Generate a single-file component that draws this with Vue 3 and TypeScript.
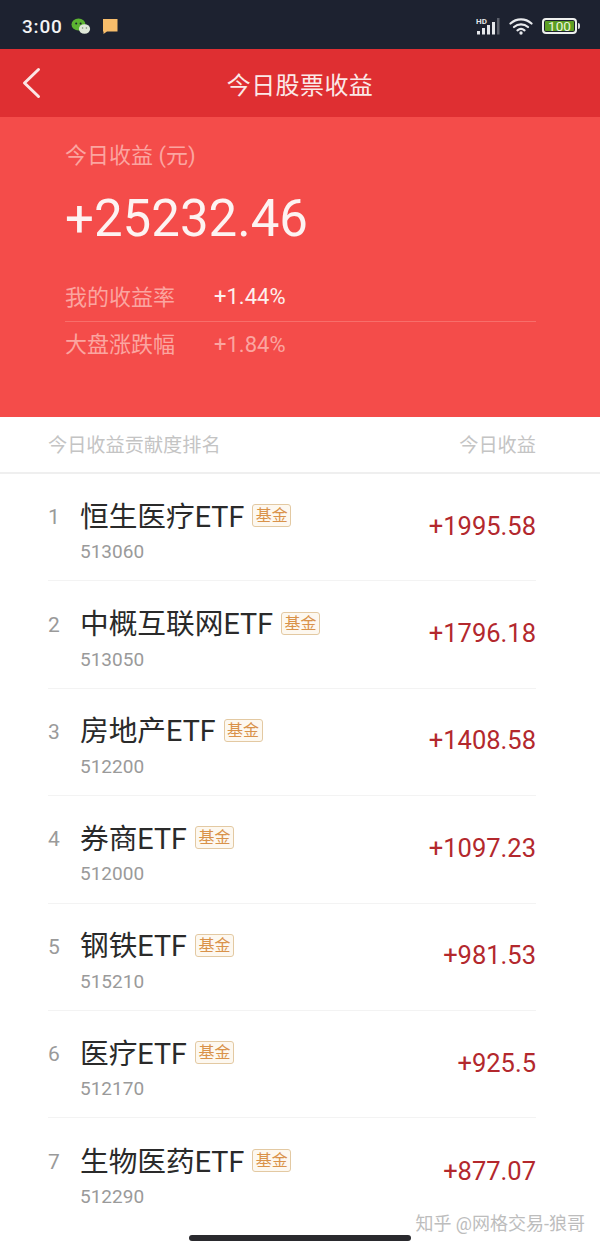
<script setup lang="ts">
interface Holding {
  name: string
  code: string
  gain: string
}

const holdings: Holding[] = [
  { name: '恒生医疗ETF', code: '513060', gain: '+1995.58' },
  { name: '中概互联网ETF', code: '513050', gain: '+1796.18' },
  { name: '房地产ETF', code: '512200', gain: '+1408.58' },
  { name: '券商ETF', code: '512000', gain: '+1097.23' },
  { name: '钢铁ETF', code: '515210', gain: '+981.53' },
  { name: '医疗ETF', code: '512170', gain: '+925.5' },
  { name: '生物医药ETF', code: '512290', gain: '+877.07' }
]
</script>

<template>
  <div class="page">
    <div class="status">
      <span class="time">3:00</span>
      <svg class="wechat" width="20" height="17" viewBox="0 0 20 17">
        <ellipse cx="7.5" cy="6.5" rx="7" ry="6" fill="#5cb531" />
        <ellipse cx="13.5" cy="11" rx="5.6" ry="4.8" fill="#dfe8d8" />
        <circle cx="5.2" cy="5.5" r="1" fill="#1d2230" />
        <circle cx="9.6" cy="5.5" r="1" fill="#1d2230" />
        <circle cx="11.6" cy="10" r=".8" fill="#7a8a70" />
        <circle cx="15.4" cy="10" r=".8" fill="#7a8a70" />
      </svg>
      <svg class="msg" width="16" height="16" viewBox="0 0 16 16">
        <path d="M1 1h14.500v12.500H5L1.500 16V13.500H1z" fill="#f7bd6b" />
      </svg>
      <span class="spacer"></span>
      <svg class="signal" width="24" height="18" viewBox="0 0 24 18">
        <text x="0" y="7" class="hd">HD</text>
        <rect x="1" y="14" width="3" height="3.500" fill="#e4e6ea" />
        <rect x="6" y="11" width="3" height="6.500" fill="#e4e6ea" />
        <rect x="11" y="8" width="3" height="9.500" fill="#e4e6ea" />
        <rect x="16" y="5" width="3" height="12.500" fill="#e4e6ea" />
        <rect x="21" y="1" width="2.500" height="16.500" fill="#5c606b" />
      </svg>
      <svg class="wifi" width="24" height="18" viewBox="0 0 24 18">
        <path d="M1.500 6.500C7.500 1 16.500 1 22.500 6.500M5 10c4-3.500 10-3.500 14 0M8.500 13.300c2-1.600 5-1.600 7 0" fill="none" stroke="#e9ebee" stroke-width="2.200" stroke-linecap="round" />
        <circle cx="12" cy="16" r="1.700" fill="#e9ebee" />
      </svg>
      <div class="battery">
        <div class="cell">100</div>
        <span class="nub"></span>
      </div>
    </div>

    <div class="nav">
      <svg class="back" width="20" height="32" viewBox="0 0 20 32">
        <path d="M17.500 2.500 3.500 16l14 13.500" fill="none" stroke="#fbe6e5" stroke-width="3" stroke-linecap="round" stroke-linejoin="round" />
      </svg>
      <span class="title">今日股票收益</span>
    </div>

    <div class="hero">
      <div class="hero-label">今日收益 (元)</div>
      <div class="hero-value">+25232.46</div>
      <div class="rate rate-mine">
        <span class="rate-name">我的收益率</span>
        <span class="rate-value">+1.44%</span>
      </div>
      <div class="rate rate-market">
        <span class="rate-name">大盘涨跌幅</span>
        <span class="rate-value dim">+1.84%</span>
      </div>
    </div>

    <div class="list-head">
      <span>今日收益贡献度排名</span>
      <span>今日收益</span>
    </div>

    <div class="list">
      <div v-for="(item, i) in holdings" :key="item.code" class="row">
        <span class="rank">{{ i + 1 }}</span>
        <div class="info">
          <div class="name-line">
            <span class="name">{{ item.name }}</span>
            <span class="tag">基金</span>
          </div>
          <div class="code">{{ item.code }}</div>
        </div>
        <span class="gain">{{ item.gain }}</span>
      </div>
    </div>

    <div class="watermark">知乎 @网格交易-狼哥</div>
    <div class="home-bar"></div>
  </div>
</template>

<style>
html,
body {
  margin: 0;
  background: #fff;
}
</style>

<style scoped>
.page {
  position: relative;
  width: 600px;
  height: 1249px;
  overflow: hidden;
  background: #fff;
  font-family: Roboto, "Noto Sans CJK SC", sans-serif;
}

.status {
  height: 49px;
  box-sizing: border-box;
  padding: 3px 20px 0 22px;
  display: flex;
  align-items: center;
  background: #1d2230;
}

.time {
  font-size: 19px;
  font-weight: 500;
  color: #f2f3f5;
  letter-spacing: 0.8px;
}

.wechat {
  margin-left: 8px;
}

.msg {
  margin-left: 11px;
}

.spacer {
  flex: 1;
}

.hd {
  font-size: 8px;
  font-weight: 700;
  fill: #e4e6ea;
}

.signal {
  margin-right: 1px;
}

.wifi {
  margin-left: 8px;
}

.battery {
  margin-left: 9px;
  display: flex;
  align-items: center;
}

.cell {
  width: 31px;
  height: 12px;
  border: 2px solid #eef0ee;
  border-radius: 4px;
  background: #5c9e23;
  box-shadow: inset 0 0 0 1px #1d2230;
  color: #eaf6dc;
  font-size: 13.5px;
  line-height: 12px;
  text-align: center;
}

.nub {
  width: 2px;
  height: 6px;
  margin-left: 1px;
  border-radius: 0 2px 2px 0;
  background: #d8dade;
}

.nav {
  position: relative;
  height: 68px;
  display: flex;
  align-items: center;
  justify-content: center;
  background: #df2f32;
}

.back {
  position: absolute;
  left: 21px;
  top: 18px;
}

.title {
  font-size: 24px;
  color: #fbe9e8;
  letter-spacing: 0.4px;
}

.hero {
  height: 300px;
  box-sizing: border-box;
  padding: 23px 64px 0 65px;
  background: #f44c4a;
}

.hero-label {
  font-size: 22px;
  line-height: 32px;
  color: #fba5a0;
}

.hero-value {
  margin-top: 18px;
  font-size: 51px;
  line-height: 58px;
  color: #fdf3f2;
}

.rate {
  display: flex;
  align-items: center;
  color: #fba5a0;
  font-size: 22px;
}

.rate-mine {
  box-sizing: border-box;
  height: 51px;
  margin-top: 23px;
  padding-bottom: 3px;
  border-bottom: 1px solid #f86e6a;
}

.rate-market {
  height: 40px;
}

.rate-name {
  width: 149px;
}

.rate-value {
  margin-top: 4px;
  font-size: 22px;
  color: #fdf0ee;
}

.rate-value.dim {
  color: #fba5a0;
}

.list-head {
  height: 57px;
  box-sizing: border-box;
  padding: 0 64px 2px 48px;
  display: flex;
  align-items: center;
  justify-content: space-between;
  border-bottom: 2px solid #efefef;
  color: #c4c4c4;
  font-size: 19.2px;
}

.list {
  padding: 0 64px 0 48px;
}

.row {
  height: 107.4px;
  box-sizing: border-box;
  display: flex;
  align-items: center;
  border-bottom: 1px solid #f3f3f3;
}

.row:last-child {
  border-bottom: 0;
}

.rank {
  width: 32px;
  margin-top: -20px;
  color: #9a9a9a;
  font-size: 21px;
}

.info {
  flex: 1;
  padding-top: 6px;
}

.name-line {
  display: flex;
  align-items: center;
  height: 36px;
}

.name {
  font-size: 28.7px;
  color: #2a2a2a;
}

.tag {
  margin: 3px 0 0 8px;
  width: 37px;
  height: 21px;
  box-sizing: content-box;
  border: 1px solid #e3c9a2;
  border-radius: 3px;
  background: #fdf8f0;
  color: #d9924a;
  font-size: 16px;
  line-height: 21px;
  text-align: center;
}

.code {
  margin-top: 8px;
  font-size: 19px;
  line-height: 24px;
  color: #9a9a9a;
}

.gain {
  margin-top: -3px;
  font-size: 25.5px;
  color: #b3282d;
}

.watermark {
  position: absolute;
  right: 15px;
  top: 1213px;
  font-size: 18px;
  line-height: 22px;
  color: #bdbdbd;
}

.home-bar {
  position: absolute;
  left: 189px;
  top: 1235px;
  width: 222px;
  height: 6px;
  border-radius: 3px;
  background: #2a2a2e;
}
</style>
